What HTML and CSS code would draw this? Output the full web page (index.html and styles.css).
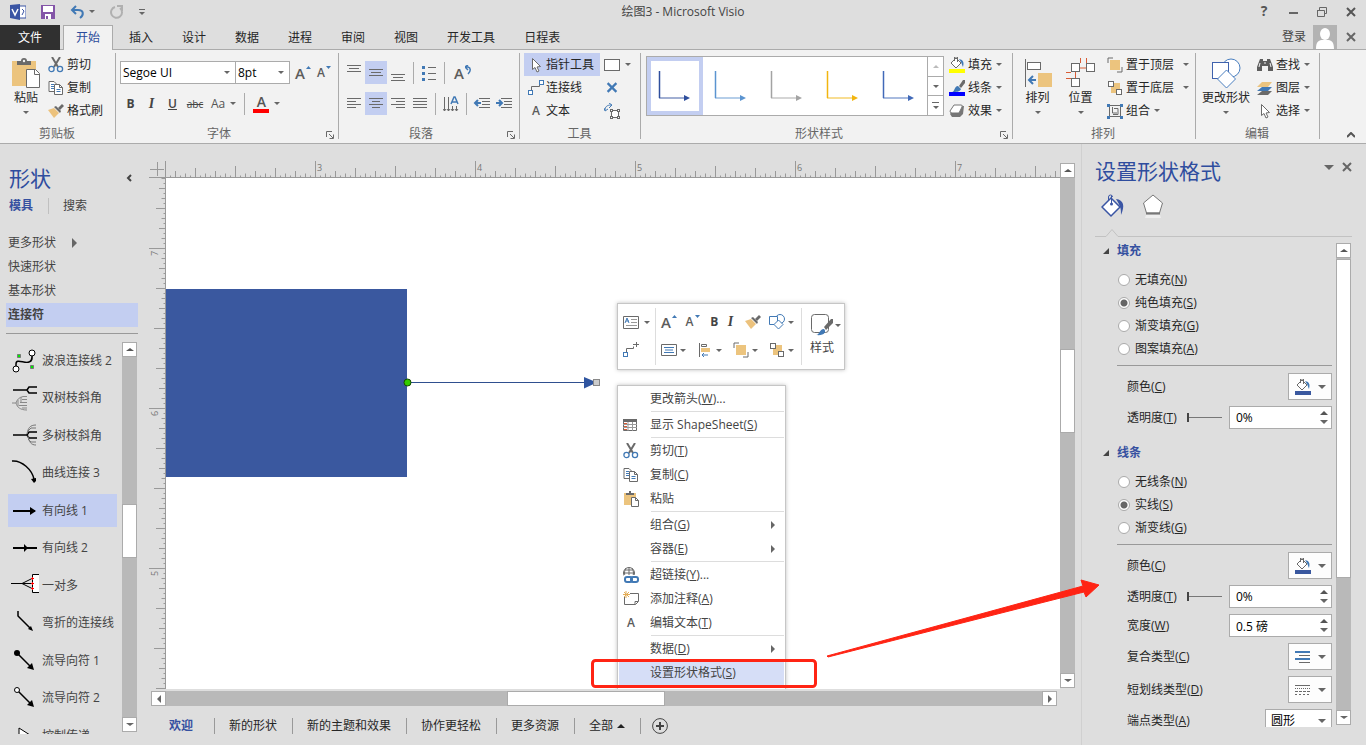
FILE: index.html
```html
<!DOCTYPE html>
<html lang="zh-CN">
<head>
    <meta charset="UTF-8">
    <meta name="viewport" content="width=device-width, initial-scale=1.0">
    <title>绘图3 - Microsoft Visio</title>
    <link rel="stylesheet" href="styles.css">
</head>
<body>
    <!-- Shared icons -->
    <svg class="sprite" aria-hidden="true">
        <symbol id="cut" viewBox="0 0 16 16"><path d="M4 0l6 10M12 0L6 10" stroke="#6a6a6a" stroke-width="2" fill="none"/><circle cx="3.5" cy="12" r="2.6" fill="none" stroke="#4179b5" stroke-width="1.3"/><circle cx="12" cy="12" r="2.6" fill="none" stroke="#4179b5" stroke-width="1.3"/></symbol>
        <symbol id="copy" viewBox="0 0 16 16"><path d="M1 1.500h5l3 3v7H1z" fill="#fff" stroke="#6a6a6a"/><path d="M3 4.500h3M3 6.500h4M3 8.500h3" stroke="#4179b5"/><path d="M6.500 4.500h5l3 3v7h-8z" fill="#fff" stroke="#6a6a6a"/><path d="M11.500 4.500v3h3" fill="none" stroke="#6a6a6a"/><path d="M8.500 9.500h4M8.500 11.500h4" stroke="#4179b5"/></symbol>
        <symbol id="brush" viewBox="0 0 16 16"><path d="M0 7l6-2 5 5-5 5z" fill="#ecc27d"/><path d="M6 4l2-1 5 5-1 2z" fill="#6a6a6a"/><path d="M10 5l4-4 2 2-4 4z" fill="#6a6a6a"/></symbol>
        <symbol id="paste" viewBox="0 0 28 30"><rect x="0" y="3" width="24" height="25" fill="#ecc47e"/><path d="M5 7V3h4a3 3 0 0 1 6 0h4v4z" fill="#6a6a6a"/><circle cx="12" cy="3" r="1.200" fill="#f2f2f2"/><path d="M14.500 11.500h9l4 4v14h-13z" fill="#fff" stroke="#6a6a6a"/><path d="M22.500 11.500v5h5" fill="none" stroke="#6a6a6a"/></symbol>
        <symbol id="paste-small" viewBox="0 0 16 16"><path d="M1 2h12v12H1z" fill="#ecc47e"/><path d="M3 4V2h3V0h2v2h3v2z" fill="#6a6a6a"/><path d="M8.500 6.500h4l3 3v6h-7z" fill="#fff" stroke="#6a6a6a"/><path d="M12.500 6.500v3h3" fill="none" stroke="#6a6a6a"/></symbol>
        <symbol id="cursor" viewBox="0 0 16 16"><path d="M4.500 1.500v11l2.500-2 2 4.500 2-1-2-4 3.500-.5z" fill="#fff" stroke="#6a6a6a"/></symbol>
        <symbol id="bucket" viewBox="0 0 16 16"><path d="M2 7l5-5 5 5-5 5z" fill="#fff" stroke="#6a6a6a"/><path d="M5.500 5V1h3v5" fill="none" stroke="#6a6a6a"/><path d="M10 3c5 1 5 4 4 8-1-2-1-4-4-8z" fill="#4179b5"/></symbol>
        <symbol id="shapes" viewBox="0 0 30 30"><circle cx="20" cy="10" r="9" fill="#fff" stroke="#4a7fc0"/><rect x="1.500" y="4.500" width="16" height="16" fill="#fff" stroke="#3f62ad"/><path d="M15.500 12l9 9-9 9-9-9z" fill="#fff" stroke="#4a7fc0"/></symbol>
        <symbol id="shapes-small" viewBox="0 0 16 16"><circle cx="11" cy="5" r="4.500" fill="#fff" stroke="#4179b5"/><path d="M.5 2.500h8v8h-8z" fill="#fff" stroke="#4179b5"/><path d="M9.500 6l4.500 4.500L9.500 15 5 10.500z" fill="#fff" stroke="#4179b5"/></symbol>
        <symbol id="front" viewBox="0 0 16 16"><path d="M1 6V1h5M15 10v5h-5" stroke="#6a6a6a" fill="none"/><rect x="3" y="3" width="10" height="10" fill="#ecc47e"/></symbol>
        <symbol id="back" viewBox="0 0 16 16"><rect x="4" y="3" width="9" height="10" fill="#ecc47e"/><rect x="1.500" y="1.500" width="5" height="5" fill="#fff" stroke="#6a6a6a"/><rect x="9.500" y="9.500" width="5" height="5" fill="#fff" stroke="#6a6a6a"/></symbol>
        <symbol id="conn" viewBox="0 0 16 16"><path d="M3.500 10V6.500h8V4" fill="none" stroke="#6a6a6a"/><rect x=".5" y="10.500" width="4" height="4" fill="#fff" stroke="#4179b5"/><rect x="11.500" y=".5" width="4" height="4" fill="#fff" stroke="#4179b5"/></symbol>
        <symbol id="cross" viewBox="0 0 10 10"><path d="M1 1l8 8M9 1L1 9" stroke="currentColor" stroke-width="2"/></symbol>
        <symbol id="launch" viewBox="0 0 8 8"><path d="M.5 6V.5H6M3 3l4 4M7.500 3.500v4h-4" fill="none" stroke="#6a6a6a"/></symbol>
        <symbol id="style-line" viewBox="0 0 34 30"><path d="M1.500 0v27" stroke="currentColor" stroke-width="1.500" fill="none"/><path d="M1 27h26" stroke="currentColor" stroke-width="1.500" opacity=".6"/><path d="M26 24l6 3-6 3z" fill="currentColor"/></symbol>
        <symbol id="align" viewBox="0 0 28 30"><path d="M1.500 1v28" stroke="#6a6a6a"/><rect x="3.500" y="4.500" width="13" height="7" fill="#fff" stroke="#6a6a6a"/><rect x="14" y="15" width="14" height="14" fill="#ecc47e"/><path d="M12 22H5M9 18l-4 4 4 4" fill="none" stroke="#4179b5" stroke-width="2"/></symbol>
    </svg>

    <header class="titlebar">
        <div class="quick">
            <svg width="16" height="16"><rect x="7" y="2" width="9" height="12" fill="#fff" stroke="#3a55a4"/><path d="M0 1l10-1v16L0 14z" fill="#3a55a4"/><path d="M2 5l3 6 3-6" fill="none" stroke="#fff" stroke-width="1.500"/><path d="M12 5l2 2-2 4" fill="none" stroke="#3a55a4"/></svg>
            <svg width="14" height="14"><path d="M0 0h14v14H0z" fill="#8455a8"/><path d="M2 1h10v6H2zM4 9h6v5H4z" fill="#fff"/><path d="M5 11h2v3H5z" fill="#8455a8"/></svg>
            <span class="undo"><svg width="15" height="14"><path d="M2 5h6c6 0 6 5 2 8M6 1L2 5l4 4" fill="none" stroke="#4179b5" stroke-width="2"/></svg><i class="caret"></i></span>
            <svg width="14" height="14"><path d="M5 2a5.500 5.500 0 1 0 5 1M7 1h5v5" fill="none" stroke="#b0b0b0" stroke-width="2"/></svg>
            <span class="custom"><i class="caret"></i></span>
        </div>
        <h1>绘图3 - Microsoft Visio</h1>
        <div class="window-buttons">
            <button aria-label="帮助"><b>?</b></button>
            <button aria-label="最小化"><svg width="10" height="10"><path d="M1 6h9" stroke="#666" stroke-width="2"/></svg></button>
            <button aria-label="还原"><svg width="10" height="10"><path d="M2.500 3V.5h7v6H8M0 3.500h7.500v6h-7V3" fill="none" stroke="#666"/></svg></button>
            <button aria-label="关闭"><svg width="10" height="10"><use href="#cross"/></svg></button>
        </div>
    </header>

    <nav class="tabs">
        <button class="file">文件</button>
        <button class="tab active">开始</button>
        <button class="tab">插入</button>
        <button class="tab">设计</button>
        <button class="tab">数据</button>
        <button class="tab">进程</button>
        <button class="tab">审阅</button>
        <button class="tab">视图</button>
        <button class="tab">开发工具</button>
        <button class="tab">日程表</button>
        <div class="account">
            <a href="#">登录</a>
            <svg width="24" height="24"><path d="M0 0h24v24H0z" fill="#b3b3b3"/><ellipse cx="12" cy="9" rx="5" ry="6" fill="#fff"/><path d="M3 24c0-10 5-9 9-9s9-1 9 9z" fill="#fff"/></svg>
            <button aria-label="关闭文档"><svg width="10" height="10"><use href="#cross"/></svg></button>
        </div>
    </nav>

    <section class="ribbon">
        <div class="group clipboard">
            <div class="group-body">
                <button class="big"><svg width="28" height="30"><use href="#paste"/></svg><span>粘贴</span><i class="caret"></i></button>
                <div class="stack">
                    <button><svg width="16" height="16"><use href="#cut"/></svg>剪切</button>
                    <button><svg width="16" height="16"><use href="#copy"/></svg>复制</button>
                    <button><svg width="16" height="16"><use href="#brush"/></svg>格式刷</button>
                </div>
            </div>
            <h2>剪贴板</h2>
        </div>

        <div class="group font">
            <div class="group-body rows">
                <div class="row">
                    <label class="combo family"><select aria-label="字体"><option>Segoe UI</option></select><i class="caret"></i></label>
                    <label class="combo size"><select aria-label="字号"><option>8pt</option></select><i class="caret"></i></label>
                    <button class="grow" aria-label="增大字号"><span class="glyph large">A</span><svg width="5" height="14"><path d="M0 3l2.500-3L5 3z" fill="#4179b5"/></svg></button>
                    <button class="grow" aria-label="减小字号"><span class="glyph">A</span><svg width="5" height="14"><path d="M0 0l2.500 3L5 0z" fill="#4179b5"/></svg></button>
                </div>
                <div class="row">
                    <button class="letter"><b>B</b></button>
                    <button class="letter italic">I</button>
                    <button class="letter under">U</button>
                    <button class="letter strike">abc</button>
                    <button class="case">Aa<i class="caret"></i></button>
                    <span class="sep"></span>
                    <button class="case"><span class="ink">A</span><i class="caret"></i></button>
                </div>
            </div>
            <h2>字体</h2>
            <svg class="launcher" width="8" height="8"><use href="#launch"/></svg>
        </div>

        <div class="group paragraph">
            <div class="group-body rows">
                <div class="row">
                    <button class="square" aria-label="顶端对齐"><svg width="16" height="16"><path d="M1 .5h14M3 3.500h10M1 6.500h14" stroke="#6a6a6a"/></svg></button>
                    <button class="square on" aria-label="中部对齐"><svg width="16" height="16"><path d="M1 4.500h14M3 7.500h10M1 10.500h14" stroke="#6a6a6a"/></svg></button>
                    <button class="square" aria-label="底端对齐"><svg width="16" height="16"><path d="M1 9.500h14M3 12.500h10M1 15.500h14" stroke="#6a6a6a"/></svg></button>
                    <span class="sep"></span>
                    <button class="square" aria-label="项目符号"><svg width="16" height="16"><path d="M7 2.500h8M7 8.500h8M7 14.500h8" stroke="#6a6a6a"/><path d="M1 1h3v3H1zM1 7h3v3H1zM1 13h3v3H1z" fill="#4179b5"/></svg></button>
                    <span class="sep"></span>
                    <button class="rotate" aria-label="旋转文本"><span class="glyph large">A</span><svg width="6" height="16"><path d="M0 2h3c3 1 3 4 0 7M3 0L0 2l3 3" fill="none" stroke="#4179b5" stroke-width="1.500"/></svg></button>
                </div>
                <div class="row">
                    <button class="square" aria-label="左对齐"><svg width="16" height="16"><path d="M1 2.500h14M1 5.500h9M1 8.500h14M1 11.500h9" stroke="#6a6a6a"/></svg></button>
                    <button class="square on" aria-label="居中"><svg width="16" height="16"><path d="M1 2.500h14M4 5.500h8M1 8.500h14M4 11.500h8" stroke="#6a6a6a"/></svg></button>
                    <button class="square" aria-label="右对齐"><svg width="16" height="16"><path d="M1 2.500h14M6 5.500h9M1 8.500h14M6 11.500h9" stroke="#6a6a6a"/></svg></button>
                    <button class="square" aria-label="两端对齐"><svg width="16" height="16"><path d="M1 2.500h14M1 5.500h14M1 8.500h14M1 11.500h14" stroke="#6a6a6a"/></svg></button>
                    <span class="sep"></span>
                    <button class="square" aria-label="文字方向"><svg width="16" height="16"><path d="M1.500 1v14M5.500 1v14M9.500 10v5M13.500 10v5M0 13l1.500 2L3 13M4 13l1.500 2L7 13M8 13l1.500 2 1.500-2M12 13l1.500 2 1.500-2" fill="none" stroke="#6a6a6a"/><path d="M8 8l3-7h1l3 7M9 6h5" fill="none" stroke="#4179b5" stroke-width="1.500"/></svg></button>
                    <span class="sep"></span>
                    <button class="square" aria-label="减少缩进"><svg width="18" height="16"><path d="M6 2.500h11M9 5.500h8M9 8.500h8M6 11.500h11" stroke="#6a6a6a"/><path d="M8 7H2M5 4L2 7l3 3" fill="none" stroke="#4179b5" stroke-width="2"/></svg></button>
                    <button class="square" aria-label="增加缩进"><svg width="18" height="16"><path d="M6 2.500h11M9 5.500h8M9 8.500h8M6 11.500h11" stroke="#6a6a6a"/><path d="M1 7h6M4 4l3 3-3 3" fill="none" stroke="#4179b5" stroke-width="2"/></svg></button>
                </div>
            </div>
            <h2>段落</h2>
            <svg class="launcher" width="8" height="8"><use href="#launch"/></svg>
        </div>

        <div class="group tools">
            <div class="group-body">
                <div class="stack">
                    <button class="on"><svg width="16" height="16"><use href="#cursor"/></svg>指针工具</button>
                    <button><svg width="16" height="16"><use href="#conn"/></svg>连接线</button>
                    <button><span class="glyph wide">A</span>文本</button>
                </div>
                <div class="stack">
                    <button aria-label="矩形"><svg width="16" height="16"><rect x=".5" y="2.500" width="15" height="11" fill="#fff" stroke="#6a6a6a"/></svg><i class="caret"></i></button>
                    <button aria-label="连接点"><svg class="blue" width="16" height="11"><use href="#cross"/></svg></button>
                    <button aria-label="文本块"><svg width="16" height="16"><path d="M1 7c0-3 2-5 6-5M5 0l3 2-3 3M0 5l1 3 3-2" fill="none" stroke="#4179b5"/><path d="M7.500 7.500h7v7h-7z" fill="#fff" stroke="#6a6a6a"/><path d="M6 6h3v3H6zM13 6h3v3h-3zM6 13h3v3H6zM13 13h3v3h-3z" fill="#6a6a6a"/><path d="M7 7h1v1H7zM14 7h1v1h-1zM7 14h1v1H7zM14 14h1v1h-1z" fill="#fff"/></svg></button>
                </div>
            </div>
            <h2>工具</h2>
        </div>

        <div class="group styles">
            <div class="group-body">
                <div class="gallery">
                    <button class="chosen" aria-label="样式 1"><svg class="c1" width="34" height="30"><use href="#style-line"/></svg></button>
                    <button aria-label="样式 2"><svg class="c2" width="34" height="30"><use href="#style-line"/></svg></button>
                    <button aria-label="样式 3"><svg class="c3" width="34" height="30"><use href="#style-line"/></svg></button>
                    <button aria-label="样式 4"><svg class="c4" width="34" height="30"><use href="#style-line"/></svg></button>
                    <button aria-label="样式 5"><svg class="c5" width="34" height="30"><use href="#style-line"/></svg></button>
                    <div class="gallery-nav">
                        <button aria-label="上一行"><i class="caret up dim"></i></button>
                        <button aria-label="下一行"><i class="caret"></i></button>
                        <button class="more" aria-label="其他"><i class="caret"></i></button>
                    </div>
                </div>
                <div class="stack">
                    <button><svg width="16" height="16"><use href="#bucket" y="-1"/><path d="M0 12h16v4H0z" fill="#ff0"/></svg>填充<i class="caret"></i></button>
                    <button><svg width="16" height="16"><path d="M10 6l4-6h2v3l-4 5z" fill="#6a6a6a"/><path d="M3 12c3 0 2-6 6-6l3 3c-1 3-5 3-9 3z" fill="#4179b5"/><path d="M0 12h16v4H0z" fill="#00f"/></svg>线条<i class="caret"></i></button>
                    <button><svg width="16" height="16"><path d="M6 3h9l-1 8-3 3H3l-2-3z" fill="#777"/><path d="M5 2h7q2 0 1 2l-3 6H3q-2 0-2-2z" fill="#fff" stroke="#777"/></svg>效果<i class="caret"></i></button>
                </div>
            </div>
            <h2>形状样式</h2>
            <svg class="launcher" width="8" height="8"><use href="#launch"/></svg>
        </div>

        <div class="group arrange">
            <div class="group-body">
                <button class="big"><svg width="28" height="30"><use href="#align"/></svg><span>排列</span><i class="caret"></i></button>
                <button class="big"><svg width="30" height="30"><path d="M14.500 0v5M20.500 0v5M13 10h8M9.500 14v8M0 14.500h5M0 20.500h5" stroke="#d95c35"/><rect x="5.500" y="5.500" width="8" height="8" fill="#fff" stroke="#6a6a6a"/><rect x="20.500" y="5.500" width="8" height="8" fill="#fff" stroke="#6a6a6a"/><rect x="5.500" y="20.500" width="8" height="8" fill="#fff" stroke="#6a6a6a"/></svg><span>位置</span><i class="caret"></i></button>
                <div class="stack">
                    <button><svg width="16" height="16"><use href="#front"/></svg>置于顶层<i class="caret far"></i></button>
                    <button><svg width="16" height="16"><use href="#back"/></svg>置于底层<i class="caret far"></i></button>
                    <button><svg width="16" height="16"><path d="M2.500 2.500h11v11h-11zM5.500 4v6H10M7 5.500h4v6H6" fill="none" stroke="#6a6a6a"/><path d="M0 1h3v3H0zM13 1h3v3h-3zM0 13h3v3H0zM13 13h3v3h-3z" fill="#4179b5"/></svg>组合<i class="caret"></i></button>
                </div>
            </div>
            <h2>排列</h2>
        </div>

        <div class="group edit">
            <div class="group-body">
                <button class="big"><svg width="30" height="30"><use href="#shapes"/></svg><span>更改形状</span><i class="caret"></i></button>
                <div class="stack">
                    <button><svg width="16" height="16"><path d="M3 2h3v2h4V2h3l3 8v4h-5V9H5v5H0v-4z" fill="#5d5d5d"/><path d="M3 6l-1 4M13 6l1 4M7 6h2" stroke="#f2f2f2"/></svg>查找<i class="caret"></i></button>
                    <button><svg width="16" height="16"><path d="M5 11h10l-4 4H0z" fill="#6a6a6a"/><path d="M5 7h10l-4 4H0z" fill="#4179b5"/><path d="M5 2h10l-4 5H0z" fill="#ecc47e"/></svg>图层<i class="caret"></i></button>
                    <button><svg width="16" height="16"><use href="#cursor"/></svg>选择<i class="caret"></i></button>
                </div>
            </div>
            <h2>编辑</h2>
        </div>
        <button class="collapse" aria-label="折叠功能区"><svg width="8" height="6"><path d="M0 5l4-4 4 4" fill="none" stroke="#555" stroke-width="2"/></svg></button>
    </section>

    <main class="workspace">
        <aside class="shapes">
            <div class="shapes-head"><h2>形状</h2><svg width="6" height="8"><path d="M5 1L2 4l3 3" fill="none" stroke="#444" stroke-width="2"/></svg></div>
            <div class="shapes-tabs"><b>模具</b><span>搜索</span></div>
            <ul class="stencils">
                <li>更多形状<i class="tri-right"></i></li>
                <li>快速形状</li>
                <li>基本形状</li>
                <li class="current">连接符</li>
            </ul>
            <div class="masters">
                <ul>
                    <li><svg width="28" height="28"><path d="M5 22v-5c0-6 9 0 13-2 4-1 3-5 3-9" fill="none" stroke="#000" stroke-width="1.500"/><circle cx="5" cy="22" r="3" fill="#fff" stroke="#000"/><circle cx="21" cy="6" r="3" fill="#fff" stroke="#000"/><path d="M6.500 7.500h3v3h-3zM19.500 18.500h3v3h-3z" fill="#0e0" stroke="#777"/></svg>波浪连接线 2</li>
                    <li><svg width="28" height="28"><path d="M2 6h14M16 6l2-3h8M16 6l2 3h8" fill="none" stroke="#000" stroke-width="1.500"/><path d="M1 19h4M16 12.500h-4c-4 1-6 3-7 6.500 1 4 4 7 11 7M16 15.500h-5M16 18.500H9M16 21.500H8M16 24h-5M10 13v6M7 16v6" fill="none" stroke="#888"/></svg>双树枝斜角</li>
                    <li><svg width="28" height="28"><path d="M2 13h14M16 13l2-3h8M16 13l2 3h8" fill="none" stroke="#000" stroke-width="1.500"/><path d="M16 12c1-6 3-9 9-9M17 9l3-3h5M17 14c1 6 3 9 8 9M17 17l3 3h5" fill="none" stroke="#777"/></svg>多树枝斜角</li>
                    <li><svg width="28" height="28"><path d="M1 2c10-1 20 9 22 18" fill="none" stroke="#000" stroke-width="1.500"/><path d="M20 20l5-1v3l-2 2z"/></svg>曲线连接 3</li>
                    <li class="current"><svg width="28" height="28"><path d="M2 14h22" stroke="#000" stroke-width="2"/><path d="M19 10l6 4-6 4z"/></svg>有向线 1</li>
                    <li><svg width="28" height="28"><path d="M2 14h24" stroke="#000" stroke-width="2"/><path d="M13 10l4 4-4 4z"/></svg>有向线 2</li>
                    <li><svg width="28" height="28"><path d="M28 2.500h-6.500v18H28" fill="#fff" stroke="#000"/><path d="M0 11.500h21M11 11.500l10-5M11 11.500l10 5" fill="none" stroke="#000"/><path d="M20 6.500h3M21.500 5v3M20 11.500h3M21.500 10v3M20 16.500h3M21.500 15v3" stroke="#f00"/></svg>一对多</li>
                    <li><svg width="28" height="28"><path d="M7 2v5l13 13" fill="none" stroke="#000" stroke-width="1.500"/><path d="M22 22l-5-2 3-3z"/></svg>弯折的连接线</li>
                    <li><svg width="28" height="28"><path d="M6 6l15 15" stroke="#000" stroke-width="1.500"/><circle cx="6" cy="6" r="3"/><path d="M23 23l-7-2 5-5z"/></svg>流导向符 1</li>
                    <li><svg width="28" height="28"><path d="M6 6l15 15" stroke="#000" stroke-width="1.500"/><circle cx="6" cy="6" r="2.500" fill="#fff" stroke="#000"/><path d="M23 23l-7-2 5-5z"/></svg>流导向符 2</li>
                    <li><svg width="28" height="28"><path d="M1 13h25" stroke="#000" stroke-width="1.500"/><path d="M8 6l11 7-11 7z" fill="#fff" stroke="#000"/></svg>控制传递</li>
                </ul>
                <div class="scroll">
                    <button aria-label="向上"><i class="caret up"></i></button>
                    <span class="thumb"></span>
                    <button aria-label="向下"><i class="caret"></i></button>
                </div>
            </div>
        </aside>

        <section class="editor">
            <div class="drawing">
                <svg class="corner" width="17" height="17"><path d="M8.500 1v14M1 8.500h14" stroke="#999"/></svg>
                <svg class="ruler-top" width="100%" height="17">
                    <defs>
                        <pattern id="inch" width="160" height="17" x="-11" patternUnits="userSpaceOnUse">
                            <path d="M.5 0v17M80.500 5v12M40.500 7v10M120.500 7v10M20.500 10v7M60.500 10v7M100.500 10v7M140.500 10v7" stroke="#999"/>
                            <path d="M10 14.500h150" stroke="#999" stroke-width="4" stroke-dasharray="1 19"/>
                            <path d="M5 15.500h155" stroke="#999" stroke-width="2" stroke-dasharray="1 9"/>
                        </pattern>
                    </defs>
                    <rect width="100%" height="17" fill="url(#inch)"/>
                    <g class="ruler-text"><text x="151" y="10">3</text><text x="311" y="10">4</text><text x="471" y="10">5</text><text x="631" y="10">6</text><text x="791" y="10">7</text></g>
                </svg>
                <svg class="ruler-left" width="17" height="100%">
                    <defs>
                        <pattern id="inch-v" width="17" height="160" y="70" patternUnits="userSpaceOnUse">
                            <path d="M0 .5h17M5 80.500h12M7 40.500h10M7 120.500h10M10 20.500h7M10 60.500h7M10 100.500h7M10 140.500h7" stroke="#999"/>
                            <path d="M14.500 10v150" stroke="#999" stroke-width="4" stroke-dasharray="1 19"/>
                            <path d="M15.500 5v155" stroke="#999" stroke-width="2" stroke-dasharray="1 9"/>
                        </pattern>
                    </defs>
                    <rect width="17" height="100%" fill="url(#inch-v)"/>
                    <g class="ruler-text"><text transform="translate(9 78) rotate(-90)">7</text><text transform="translate(9 238) rotate(-90)">6</text><text transform="translate(9 398) rotate(-90)">5</text></g>
                </svg>
                <div class="stage">
                    <svg class="page" width="100%" height="100%">
                        <rect y="111" width="241" height="188" fill="#3a589f"/>
                        <path d="M241 204.500h180" stroke="#2f4f8f"/>
                        <path d="M418 199l13 5.500-13 6z" fill="#2f55a0"/>
                        <rect x="427.500" y="201.500" width="6" height="6" fill="#ccc" stroke="#888"/>
                        <circle cx="241.500" cy="204.500" r="3.500" fill="#3c0" stroke="#164a00"/>
                    </svg>

                    <div class="mini">
                        <div class="mini-col first">
                            <div class="row"><svg width="16" height="16"><path d="M.5 2.500h15v12H.5z" fill="#fff" stroke="#6a6a6a"/><path d="M2 9l2-5 2 5M3 7h3" fill="none" stroke="#4179b5"/><path d="M8 5.500h6M8 8.500h6M3 11.500h11" stroke="#999"/></svg><i class="caret"></i></div>
                            <div class="row"><svg width="17" height="16"><path d="M3.500 11V6.500h7v-2M10 2.500h6M13.500 0v5" fill="none" stroke="#6a6a6a"/><rect x=".5" y="10.500" width="4" height="4" fill="#fff" stroke="#4179b5"/></svg></div>
                        </div>
                        <div class="mini-col">
                            <div class="row spread">
                                <span class="grow"><span class="glyph large">A</span><svg width="5" height="14"><path d="M0 3l2.500-3L5 3z" fill="#4179b5"/></svg></span>
                                <span class="grow"><span class="glyph">A</span><svg width="5" height="14"><path d="M0 0l2.500 3L5 0z" fill="#4179b5"/></svg></span>
                                <b>B</b><span class="italic">I</span>
                                <svg width="16" height="16"><use href="#brush"/></svg>
                                <span class="pair"><svg width="16" height="16"><use href="#shapes-small"/></svg><i class="caret"></i></span>
                            </div>
                            <div class="row spread">
                                <span class="pair"><svg width="16" height="16"><path d="M.5 2.500h15v11H.5z" fill="#fff" stroke="#6a6a6a"/><path d="M3 5.500h10M4 8h8M3 10.500h10" stroke="#4179b5"/></svg><i class="caret"></i></span>
                                <span class="pair"><svg width="16" height="16"><path d="M2.500 1v14" stroke="#6a6a6a"/><path d="M4.500 2.500h5v2h-5z" fill="#fff" stroke="#6a6a6a"/><path d="M4 6h9v4H4z" fill="#ecc47e"/><path d="M11 13H5M7 11l-2 2 2 2" fill="none" stroke="#4179b5"/></svg><i class="caret"></i></span>
                                <span class="pair"><svg width="16" height="16"><use href="#front"/></svg><i class="caret"></i></span>
                                <span class="pair"><svg width="16" height="16"><use href="#back"/></svg><i class="caret"></i></span>
                            </div>
                        </div>
                        <div class="mini-col last">
                            <span class="pair"><svg width="25" height="24"><rect x="1.500" y="1.500" width="17" height="18" rx="3" fill="#fff" stroke="#6a6a6a"/><path d="M14 14l7-8h2v4l-7 7z" fill="#6a6a6a"/><path d="M6 22c4 0 3-6 8-6 3 3 0 7-8 6z" fill="#4179b5"/></svg><i class="caret"></i></span>
                            <span>样式</span>
                        </div>
                    </div>

                    <ul class="menu">
                        <li>更改箭头(<u>W</u>)...</li>
                        <li class="divided"><svg width="14" height="14"><path d="M.5 1.500h13v11H.5z" fill="#fff" stroke="#6a6a6a"/><path d="M0 6.500h14M0 9.500h14M5 2v11M9.500 2v11" stroke="#999"/><path d="M0 1h14v3H0z" fill="#6a6a6a"/><path d="M1 5.500h3M1 8.500h3M1 11.500h3" stroke="#d95c35"/></svg>显示 ShapeSheet(<u>S</u>)</li>
                        <li class="divided"><svg width="16" height="16"><use href="#cut"/></svg>剪切(<u>T</u>)</li>
                        <li><svg width="16" height="16"><use href="#copy"/></svg>复制(<u>C</u>)</li>
                        <li><svg width="16" height="16"><use href="#paste-small"/></svg>粘贴</li>
                        <li class="divided">组合(<u>G</u>)<i class="sub"></i></li>
                        <li>容器(<u>E</u>)<i class="sub"></i></li>
                        <li class="divided"><svg width="16" height="16"><circle cx="6" cy="6" r="5.500" fill="none" stroke="#6a6a6a"/><path d="M6 0v11M0 6h12M2 3h8M3 1c-2 3-2 7 0 10M9 1c2 3 2 7 0 10" fill="none" stroke="#6a6a6a"/><path d="M1 8h15v8H1z" fill="#fff"/><rect x="2" y="10" width="7" height="5" rx="2" fill="none" stroke="#4179b5" stroke-width="2"/><rect x="8" y="10" width="7" height="5" rx="2" fill="none" stroke="#4179b5" stroke-width="2"/></svg>超链接(<u>Y</u>)...</li>
                        <li><svg width="16" height="16"><path d="M7 2.500h8.500v8l-3 3h-11v-8" fill="none" stroke="#6a6a6a"/><path d="M15 10.500h-3v3" fill="none" stroke="#6a6a6a"/><path d="M3 0v7M0 3.500h7M1 1l5 5M6 1L1 6" stroke="#e3ac55"/></svg>添加注释(<u>A</u>)</li>
                        <li><span class="glyph wide">A</span>编辑文本(<u>T</u>)</li>
                        <li class="divided">数据(<u>D</u>)<i class="sub"></i></li>
                        <li class="hover">设置形状格式(<u>S</u>)</li>
                    </ul>
                </div>
                <div class="scroll tall">
                    <button aria-label="向上"><i class="caret up"></i></button>
                    <span class="thumb"></span>
                    <button aria-label="向下"><i class="caret"></i></button>
                </div>
            </div>
            <div class="hscroll">
                <button aria-label="向左"><i class="tri-left"></i></button>
                <span class="thumb"></span>
                <button aria-label="向右"><i class="sub"></i></button>
            </div>
            <nav class="pages">
                <button class="current">欢迎</button>
                <button>新的形状</button>
                <button>新的主题和效果</button>
                <button>协作更轻松</button>
                <button>更多资源</button>
                <button>全部<i class="caret up"></i></button>
                <button class="add" aria-label="插入页"><svg width="16" height="16"><circle cx="8" cy="8" r="7.400" fill="none" stroke="#444"/><path d="M8 4v8M4 8h8" stroke="#444" stroke-width="2"/></svg></button>
            </nav>
            <svg class="callout" width="520" height="120">
                <rect x="4.500" y="83.500" width="223" height="26" rx="3" fill="none" stroke="#ff2414" stroke-width="3"/>
                <path d="M239 79L495 9l-2-6 18 5-13 12-2-5L240 80z" fill="#ff2414" stroke="#ff2414"/>
            </svg>
        </section>

        <aside class="format">
            <div class="format-head"><h2>设置形状格式</h2><i class="caret big-caret"></i><button aria-label="关闭"><svg width="10" height="10"><use href="#cross"/></svg></button></div>
            <div class="format-tabs">
                <svg width="24" height="24"><path d="M1 13l9-9 9 9-9 9z" fill="#fff" stroke="#3a55a4" stroke-width="1.500"/><path d="M7.500 6V3q0-2 2-2t2 2M10.500 2v8" fill="none" stroke="#3a55a4"/><circle cx="10.500" cy="10" r="1.500" fill="#3a55a4"/><path d="M15 5c8 1 9 7 5 16 0-6 0-8-5-16z" fill="#3a55a4"/></svg>
                <svg width="22" height="24"><path d="M11 1l9.500 8-3 10h-13l-3-10z" fill="#fff" stroke="#777"/><path d="M4 19.500h14" stroke="#777" stroke-width="2"/><path d="M4 21h14l1 3H3z" fill="#eee"/></svg>
            </div>
            <svg class="notch" width="100%" height="9"><path d="M0 8.500h11l6-7 6 7h2000" fill="none" stroke="#c2c2c2"/></svg>
            <div class="format-body">
                <form class="options">
                    <fieldset>
                        <legend><i class="open"></i>填充</legend>
                        <label class="radio"><input type="radio" name="fill"><span>无填充(<u>N</u>)</span></label>
                        <label class="radio"><input type="radio" name="fill" checked><span>纯色填充(<u>S</u>)</span></label>
                        <label class="radio"><input type="radio" name="fill"><span>渐变填充(<u>G</u>)</span></label>
                        <label class="radio"><input type="radio" name="fill"><span>图案填充(<u>A</u>)</span></label>
                        <div class="settings">
                            <div class="setting"><span>颜色(<u>C</u>)</span><button type="button" class="drop" aria-label="填充颜色"><svg width="16" height="16"><use href="#bucket" y="-1"/><path d="M0 12h16v4H0z" fill="#3a589f"/></svg><i class="caret"></i></button></div>
                            <div class="setting"><label for="fillAlpha">透明度(<u>T</u>)</label><input type="range" aria-label="填充透明度滑块" value="0"><span class="spin"><input type="text" id="fillAlpha" value="0%"><i class="caret up"></i><i class="caret"></i></span></div>
                        </div>
                    </fieldset>
                    <fieldset>
                        <legend><i class="open"></i>线条</legend>
                        <label class="radio"><input type="radio" name="line"><span>无线条(<u>N</u>)</span></label>
                        <label class="radio"><input type="radio" name="line" checked><span>实线(<u>S</u>)</span></label>
                        <label class="radio"><input type="radio" name="line"><span>渐变线(<u>G</u>)</span></label>
                        <div class="settings">
                            <div class="setting"><span>颜色(<u>C</u>)</span><button type="button" class="drop" aria-label="线条颜色"><svg width="16" height="16"><use href="#bucket" y="-1"/><path d="M0 12h16v4H0z" fill="#3a589f"/></svg><i class="caret"></i></button></div>
                            <div class="setting"><label for="lineAlpha">透明度(<u>T</u>)</label><input type="range" aria-label="线条透明度滑块" value="0"><span class="spin"><input type="text" id="lineAlpha" value="0%"><i class="caret up"></i><i class="caret"></i></span></div>
                            <div class="setting"><label for="lineWidth">宽度(<u>W</u>)</label><span class="spin"><input type="text" id="lineWidth" value="0.5 磅"><i class="caret up"></i><i class="caret"></i></span></div>
                            <div class="setting"><span>复合类型(<u>C</u>)</span><button type="button" class="drop" aria-label="复合类型"><svg width="16" height="16"><path d="M0 3h15M0 10h15" stroke="#4179b5" stroke-width="2"/><path d="M4 6.500h11M4 13.500h11" stroke="#6a6a6a"/></svg><i class="caret"></i></button></div>
                            <div class="setting"><span>短划线类型(<u>D</u>)</span><button type="button" class="drop" aria-label="短划线类型"><svg width="16" height="16"><path d="M0 3.500h15" stroke="#6a6a6a"/><path d="M0 6.500h15" stroke="#6a6a6a" stroke-dasharray="1 1"/><path d="M0 9.500h15" stroke="#6a6a6a" stroke-dasharray="3 1"/><path d="M0 12.500h15" stroke="#6a6a6a" stroke-dasharray="2 2"/></svg><i class="caret"></i></button></div>
                            <div class="setting"><label for="capType">端点类型(<u>A</u>)</label><span class="combo cap"><select id="capType"><option>圆形</option></select><i class="caret"></i></span></div>
                        </div>
                    </fieldset>
                </form>
                <div class="scroll">
                    <button aria-label="向上"><i class="caret up"></i></button>
                    <span class="thumb"></span>
                    <button aria-label="向下"><i class="caret"></i></button>
                </div>
            </div>
        </aside>
    </main>
</body>
</html>
```

FILE: styles.css
```css
* {
    box-sizing: border-box;
}
body {
    margin: 0;
    height: 100vh;
    min-width: 1340px;
    display: flex;
    flex-direction: column;
    overflow: hidden;
    background: #dedede;
    color: #262626;
    font: 12px/16px "Open Sans", "Noto Sans CJK SC", sans-serif;
    white-space: nowrap;
}
h1, h2, ul, fieldset, legend {
    margin: 0;
    padding: 0;
    border: 0;
    font-weight: normal;
    list-style: none;
}
button, input, select {
    margin: 0;
    padding: 0;
    border: 0;
    background: none;
    color: inherit;
    font: inherit;
}
svg {
    display: block;
    flex: none;
}
.sprite {
    position: absolute;
    width: 0;
    height: 0;
}

/* arrows */
.caret {
    flex: none;
    border: 3px solid transparent;
    border-top-color: #666;
    border-bottom: 0;
}
.caret.up {
    border-top: 0;
    border-bottom: 3px solid #555;
}
.caret.dim {
    border-bottom-color: #bbb;
}
.sub, .tri-right {
    border: 4px solid transparent;
    border-left-color: #666;
    border-right: 0;
}
.tri-right {
    border-width: 5px 0 5px 5px;
}
.tri-left {
    border: 4px solid transparent;
    border-right-color: #666;
    border-left: 0;
}

/* title bar */
.titlebar {
    display: flex;
    justify-content: space-between;
    align-items: center;
    height: 25px;
    padding: 0 10px 2px;
}
.titlebar h1 {
    font-size: 12px;
    line-height: 22px;
    color: #444;
}
.quick, .window-buttons {
    display: flex;
    align-items: center;
    gap: 15px;
    width: 300px;
    height: 22px;
}
.window-buttons {
    justify-content: flex-end;
    gap: 19px;
    color: #555;
}
.window-buttons button {
    width: 10px;
}
.window-buttons b {
    font-size: 14px;
}
.undo {
    display: flex;
    align-items: center;
    gap: 4px;
}
.custom {
    border-top: 1px solid #666;
    padding-top: 2px;
}
.custom .caret {
    display: block;
}

/* tabs */
.tabs {
    display: flex;
    gap: 3px;
    height: 25px;
    border-bottom: 1px solid #ababab;
}
.tabs .file {
    width: 60px;
    height: 25px;
    background: #303030;
    color: #fff;
}
.tab {
    height: 25px;
    padding: 0 12px;
    border: 1px solid transparent;
    border-bottom: 0;
}
.tab.active {
    background: #f2f2f2;
    border-color: #ababab;
    color: #2b4c9b;
}
.account {
    display: flex;
    align-items: center;
    gap: 7px;
    margin-left: auto;
    padding-right: 10px;
}
.account a {
    color: #444;
    text-decoration: none;
}
.account button {
    padding-left: 2px;
    color: #666;
}

/* ribbon */
.ribbon {
    position: relative;
    display: flex;
    height: 94px;
    padding-top: 3px;
    background: #f2f2f2;
    border-bottom: 1px solid #ababab;
}
.group {
    position: relative;
    height: 86px;
    border-right: 1px solid #ababab;
}
.group h2 {
    margin: 4px 5px 0 0;
    font-size: 12px;
    line-height: 16px;
    color: #666;
    text-align: center;
}
.clipboard h2 {
    margin-right: 10px;
}
.font h2, .paragraph h2, .styles h2 {
    margin-right: 20px;
}
.group-body {
    display: flex;
    height: 69px;
}
.launcher {
    position: absolute;
    right: 4px;
    bottom: 0;
}
.clipboard {
    width: 116px;
    padding-left: 9px;
}
.font {
    width: 223px;
    padding-left: 4px;
}
.paragraph {
    width: 181px;
    padding-left: 4px;
}
.tools {
    width: 121px;
    padding-left: 4px;
}
.styles {
    width: 372px;
    padding-left: 5px;
}
.arrange {
    width: 183px;
    padding-left: 3px;
}
.edit {
    width: 124px;
    padding-left: 4px;
}
.big {
    display: flex;
    flex-direction: column;
    align-items: center;
    padding-top: 5px;
    width: 34px;
}
.big span {
    margin: 2px 0 5px;
}
.arrange .big {
    width: 43px;
}
.edit .big {
    width: 52px;
}
.stack button {
    display: flex;
    align-items: center;
    gap: 3px;
    height: 23px;
    padding: 0 5px;
}
.stack .caret {
    margin-left: 1px;
}
.stack .far {
    margin-left: 6px;
}
.stack .on, .row .on {
    background: #c3cef1;
}
.tools .stack button {
    gap: 2px;
    padding: 0 6px 0 4px;
}
.tools .caret {
    margin-left: 3px;
}
.blue {
    color: #4179b5;
}
.rows {
    flex-direction: column;
    gap: 8px;
    padding-top: 8px;
}
.row {
    display: flex;
    align-items: center;
    height: 23px;
}
.sep {
    width: 1px;
    height: 22px;
    margin: 0 4px;
    background: #ababab;
}
.combo {
    display: flex;
    align-items: center;
    height: 23px;
    background: #fff;
    border: 1px solid #ababab;
    color: #000;
}
.combo select {
    flex: 1;
    width: 100%;
    height: 21px;
    margin-right: -12px;
    padding: 0 2px;
    appearance: none;
}
.combo .caret {
    margin-right: 5px;
}
.family {
    width: 116px;
}
.size {
    width: 55px;
    margin-left: -1px;
}
.glyph {
    font-size: 12px;
    font-weight: 600;
    color: #5c5c5c;
}
.large {
    font-size: 15px;
}
.wide {
    width: 16px;
    text-align: center;
}
.grow, .rotate {
    display: flex;
    align-items: center;
    gap: 1px;
    margin-left: 5px;
    width: 17px;
}
.letter {
    width: 21px;
    color: #444;
}
.italic {
    font-family: "Liberation Serif", serif;
    font-style: italic;
    font-weight: bold;
    font-size: 14px;
}
.under {
    font-weight: 600;
    text-decoration: underline;
}
.strike {
    width: 24px;
    font-size: 10px;
    text-decoration: line-through;
}
.case {
    display: flex;
    align-items: center;
    gap: 5px;
    padding: 0 4px;
    color: #555;
}
.ink {
    width: 16px;
    border-bottom: 4px solid #f00;
    font-size: 14px;
    line-height: 14px;
    font-weight: 600;
}
.square {
    display: flex;
    align-items: center;
    justify-content: center;
    width: 22px;
    height: 23px;
}
.gallery {
    display: flex;
    width: 298px;
    height: 60px;
    margin-top: 3px;
    background: #fff;
    border: 1px solid #ababab;
}
.gallery > button {
    display: flex;
    align-items: center;
    justify-content: center;
    width: 56px;
    border: 4px solid transparent;
}
.gallery > .chosen {
    border-color: #c3cef1;
}
.gallery-nav {
    display: flex;
    flex-direction: column;
    flex: 1;
    border-left: 1px solid #ababab;
}
.gallery-nav button {
    display: flex;
    flex-direction: column;
    align-items: center;
    justify-content: center;
    flex: 1;
}
.gallery-nav button + button {
    border-top: 1px solid #ababab;
}
.more::before {
    content: "";
    width: 7px;
    height: 1px;
    margin-bottom: 3px;
    background: #666;
}
.c1 { color: #2f4f9d; }
.c2 { color: #5b94d0; }
.c3 { color: #a3a3a3; }
.c4 { color: #f2b50f; }
.c5 { color: #4169b8; }
.collapse {
    position: absolute;
    right: 11px;
    bottom: 5px;
}

/* workspace */
.workspace {
    flex: 1;
    display: flex;
    min-height: 0;
}
.shapes {
    display: flex;
    flex-direction: column;
    width: 149px;
    padding: 22px 11px 11px 6px;
    color: #444;
}
.shapes-head {
    display: flex;
    align-items: center;
    justify-content: space-between;
    height: 24px;
    padding: 0 6px 0 3px;
}
.shapes-head h2, .format-head h2 {
    font-size: 21px;
    line-height: 24px;
    color: #2f4d9e;
}
.shapes-tabs {
    display: flex;
    margin-top: 8px;
    padding-left: 3px;
}
.shapes-tabs b {
    padding-right: 15px;
    border-right: 1px solid #c0c0c0;
    color: #3550a0;
}
.shapes-tabs span {
    padding-left: 14px;
}
.stencils {
    margin-top: 17px;
    padding-bottom: 6px;
    border-bottom: 1px solid #999;
}
.stencils li {
    display: flex;
    align-items: center;
    gap: 16px;
    height: 24px;
    padding-left: 2px;
}
.stencils .current {
    background: #c3cef1;
    font-weight: bold;
}
.masters {
    flex: 1;
    display: flex;
    justify-content: space-between;
    min-height: 0;
    margin-top: 8px;
    padding-right: 1px;
    overflow: hidden;
}
.masters ul {
    display: flex;
    flex-direction: column;
    justify-content: space-between;
    height: calc(100% + 18px);
    padding: 2px 0 0 2px;
}
.masters li {
    display: flex;
    align-items: center;
    gap: 3px;
    width: 109px;
    height: 33px;
    padding-left: 3px;
}
.masters .current {
    background: #c3cef1;
}

/* scroll bars */
.scroll {
    display: flex;
    flex-direction: column;
    width: 15px;
    background: #b9b9b9;
}
.scroll button, .hscroll button {
    display: flex;
    align-items: center;
    justify-content: center;
    width: 15px;
    height: 15px;
    background: #fff;
    border: 1px solid #ababab;
}
.scroll .caret {
    border-left-width: 4px;
    border-right-width: 4px;
}
.scroll .thumb {
    background: #fff;
    border: 1px solid #ababab;
}
.scroll button:last-child, .hscroll button:last-child {
    margin-top: auto;
}
.masters .scroll {
    height: calc(100% - 2px);
}
.masters .thumb {
    height: 54px;
    margin-top: 147px;
}

/* drawing area */
.editor {
    position: relative;
    flex: 1;
    display: flex;
    flex-direction: column;
    min-width: 0;
    padding-top: 17px;
}
.drawing {
    flex: 1;
    display: grid;
    grid-template-columns: 17px 1fr 16px;
    grid-template-rows: 17px 1fr;
    min-height: 0;
}
.corner {
    border-right: 1px solid #999;
    border-bottom: 1px solid #999;
}
.ruler-top {
    border-bottom: 1px solid #999;
}
.ruler-left {
    grid-row: 2;
    border-right: 1px solid #999;
}
.ruler-text {
    font-size: 9px;
    fill: #777;
}
.stage {
    position: relative;
    overflow: hidden;
    background: #fff;
}
.page {
    position: absolute;
}
.tall {
    grid-row: 1 / 3;
    grid-column: 3;
    margin: 2px 0 1px;
    width: 15px;
}
.tall .thumb {
    height: 84px;
    margin-top: 171px;
}
.hscroll {
    display: flex;
    margin: 2px 19px 0 2px;
    background: #b9b9b9;
}
.hscroll .thumb {
    width: 158px;
    margin-left: 341px;
    background: #fff;
    border: 1px solid #ababab;
}
.hscroll button:last-child {
    margin: 0 0 0 auto;
}
.pages {
    display: flex;
    align-items: center;
    height: 39px;
    padding-left: 6px;
}
.pages button {
    display: flex;
    align-items: center;
    gap: 4px;
    height: 16px;
    padding: 0 15px 0 14px;
    border-right: 1px solid #999;
}
.pages .caret {
    border-width: 0 4px 4px;
    border-bottom-color: #222;
}
.pages .current {
    padding-right: 21px;
    color: #3550a0;
    font-weight: bold;
}
.pages .add {
    padding: 0 11px;
    border: 0;
}
.callout {
    position: absolute;
    left: 439px;
    top: 433px;
    z-index: 5;
    pointer-events: none;
}

/* floating toolbar and context menu */
.mini, .menu {
    position: absolute;
    left: 451px;
    background: #fff;
    border: 1px solid #c6c6c6;
    box-shadow: 0 0 4px rgba(0, 0, 0, 0.25);
    color: #444;
}
.mini {
    top: 125px;
    display: flex;
    width: 228px;
    height: 67px;
    padding: 4px 0;
}
.mini-col {
    display: flex;
    flex-direction: column;
    gap: 4px;
    padding: 2px 7px 0 5px;
    width: 146px;
    border-right: 1px solid #ddd;
}
.mini .first {
    width: 38px;
}
.mini .row {
    gap: 5px;
    height: 24px;
}
.mini .spread {
    justify-content: space-between;
    gap: 0;
}
.mini .grow {
    margin: 0;
}
.mini b, .mini .italic {
    width: 10px;
}
.mini .last {
    width: 42px;
    gap: 1px;
    padding: 3px 0 0 8px;
    border: 0;
}
.pair {
    display: flex;
    align-items: center;
    gap: 3px;
}
.last .pair {
    gap: 0;
    height: 28px;
}
.menu {
    top: 207px;
    width: 169px;
    padding: 1px 1px 5px;
    border-bottom: 0;
}
.menu li {
    position: relative;
    display: flex;
    align-items: center;
    height: 24px;
    padding-left: 31px;
}
.menu svg, .menu .glyph {
    width: 16px;
    margin-left: -27px;
    margin-right: 11px;
}
.menu .divided {
    height: 26px;
    padding-top: 2px;
}
.menu .divided::before {
    content: "";
    position: absolute;
    left: 32px;
    right: 0;
    top: 0;
    height: 1px;
    background: #ddd;
}
.menu .hover {
    background: #d6def7;
}
.menu .sub {
    margin: 0 9px 0 auto;
}

/* format pane */
.format {
    display: flex;
    flex-direction: column;
    width: 285px;
    margin-left: 5px;
    padding: 15px 14px 18px 13px;
    border-left: 1px solid #d0d0d0;
}
.format-head {
    display: flex;
    align-items: center;
    height: 24px;
}
.format-head button {
    margin: -8px 0 0 8px;
    color: #666;
}
.big-caret {
    margin: -8px 0 0 auto;
    border-width: 5px 5px 0;
}
.format-tabs {
    display: flex;
    gap: 17px;
    margin: 11px 0 10px 6px;
}
.format-body {
    flex: 1;
    display: flex;
    min-height: 0;
    overflow: hidden;
}
.options {
    flex: 1;
    padding: 4px 4px 0 8px;
}
fieldset {
    min-width: 0;
    margin-bottom: 14px;
}
legend {
    display: flex;
    align-items: center;
    gap: 8px;
    height: 20px;
    margin-bottom: 7px;
    color: #3550a0;
    font-weight: bold;
}
.open {
    border: 3px solid #444;
    border-left-color: transparent;
    border-top-color: transparent;
}
.radio {
    display: flex;
    align-items: center;
    gap: 5px;
    height: 23px;
    margin-left: 15px;
}
.radio input {
    width: 12px;
    height: 12px;
    appearance: none;
    background: #fff;
    border: 1px solid #aaa;
    border-radius: 50%;
}
.radio input:checked {
    background: radial-gradient(#666 0 3px, #fff 4px);
}
.settings {
    display: flex;
    flex-direction: column;
    gap: 6px;
    margin: 5px 0 0 14px;
    padding: 7px 0 0 10px;
    border-top: 1px solid #999;
}
.setting {
    display: flex;
    align-items: center;
    justify-content: space-between;
}
.drop {
    display: flex;
    align-items: center;
    justify-content: center;
    gap: 7px;
    width: 44px;
    height: 27px;
    background: #fdfdfd;
    border: 1px solid #ababab;
}
.drop .caret, .cap .caret {
    border-width: 4px 4px 0;
}
.setting input[type="range"] {
    width: 35px;
    height: 9px;
    margin: 0 auto 0 10px;
    appearance: none;
    background: linear-gradient(#777, #777) center / 100% 1px no-repeat;
}
input[type="range"]::-webkit-slider-thumb {
    appearance: none;
    width: 2px;
    height: 9px;
    background: #444;
}
.spin {
    display: grid;
    grid-template-columns: 1fr 14px;
    grid-template-rows: 1fr 1fr;
    align-items: center;
    gap: 0 2px;
    width: 103px;
    height: 23px;
    padding: 2px 0;
    background: #fff;
    border: 1px solid #ababab;
    color: #000;
}
.spin input {
    grid-row: 1 / 3;
    width: 100%;
    height: 17px;
    padding-left: 6px;
}
.spin .caret {
    justify-self: center;
    border-width: 4px 4px 0;
}
.spin .up {
    border-width: 0 4px 4px;
}
.cap {
    width: 67px;
    height: 23px;
}
.cap select {
    padding-left: 5px;
}
.format-body .scroll {
    margin: 6px 1px 2px 0;
}
.format-body .thumb {
    height: 319px;
    margin-top: 1px;
}
```
